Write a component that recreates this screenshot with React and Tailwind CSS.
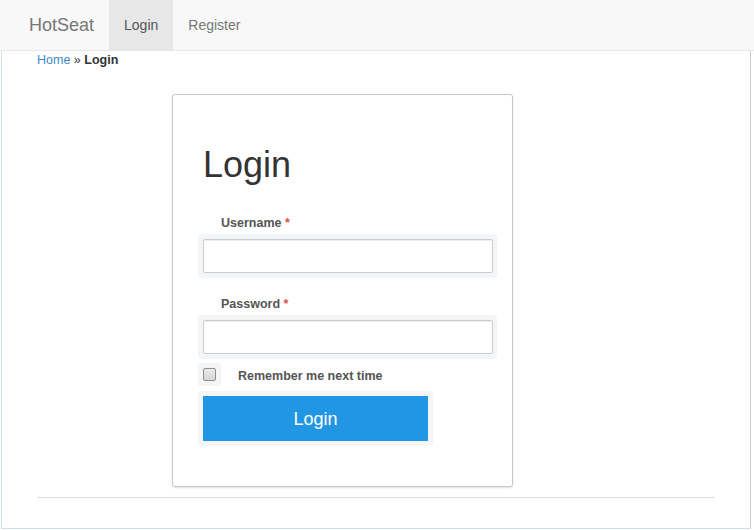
const Field = ({ label, type }) => (
    <div>
        <label className="block pl-[23px] pt-px text-[12.5px] leading-[16px] font-bold text-[#555]">
            {label} <span className="text-[#d9534f]">*</span>
        </label>
        <div className="mt-[3px] w-[299px] rounded-[4px] bg-[#f3f5f7] p-[5px] pr-[4px]">
            <input
                type={type}
                className="block h-[34px] w-[290px] rounded-[2px] border border-[#c9cdd1] bg-white px-2 text-[14px] shadow-[inset_0_1px_1px_rgba(0,0,0,0.075)] outline-none"
            />
        </div>
    </div>
);

const App = () => {
    return (
        <div className="w-[754px] h-[530px] bg-white font-['Liberation_Sans',Arial,sans-serif] overflow-hidden">
            <nav className="flex h-[51px] border-b border-[#e7e7e7] bg-[#f8f8f8] pl-[14px]">
                <a className="flex items-center px-[15px] text-[18px] leading-[20px] text-[#777]">HotSeat</a>
                <a className="flex items-center bg-[#e7e7e7] px-[15px] text-[14px] leading-[20px] text-[#555]">Login</a>
                <a className="flex items-center px-[15px] text-[14px] leading-[20px] text-[#777]">Register</a>
            </nav>

            <div className="ml-px h-[478px] w-[750px] border-x border-b border-l-[#d3dfe8] border-r-[#c8ced3] border-b-[#d3dfe8]">
                <div className="pl-[35px] pt-px text-[12.5px] leading-[17px] text-[#333]">
                    <a className="text-[#428bca]">Home</a> » <b>Login</b>
                </div>

                <div className="ml-[170px] mt-[25px] w-[341px] rounded-[3px] border border-[#c8c8c8] pl-[25px] pt-[50px] pb-[40px] shadow-[0_1px_2px_rgba(0,0,0,0.12)]">
                    <h1 className="pl-[5px] text-[36px] leading-[40px] text-[#333]">Login</h1>

                    <div className="mt-[29px] flex flex-col gap-[17px]">
                        <Field label="Username" type="text" />
                        <Field label="Password" type="password" />
                    </div>

                    <div className="mt-[4px] flex items-center">
                        <div className="flex h-[23px] w-[23px] items-center justify-center bg-[#f3f5f7]">
                            <span className="block h-[13px] w-[13px] rounded-[2px] border border-[#8e8e8e] bg-gradient-to-b from-[#eaeaea] to-[#d6d6d6]" />
                        </div>
                        <span className="ml-[17px] pt-[3px] text-[12.5px] font-bold text-[#555]">Remember me next time</span>
                    </div>

                    <div className="mt-[5px] w-[235px] rounded-[4px] bg-[#f3f5f7] p-[5px]">
                        <button type="submit" className="block h-[45px] w-[225px] bg-[#2196e3] pt-[2px] text-[18px] text-white">
                            Login
                        </button>
                    </div>
                </div>

                <hr className="mx-[35px] mt-[10px] border-0 border-t border-[#d4dee6]" />
            </div>
        </div>
    );
};

export default App;
